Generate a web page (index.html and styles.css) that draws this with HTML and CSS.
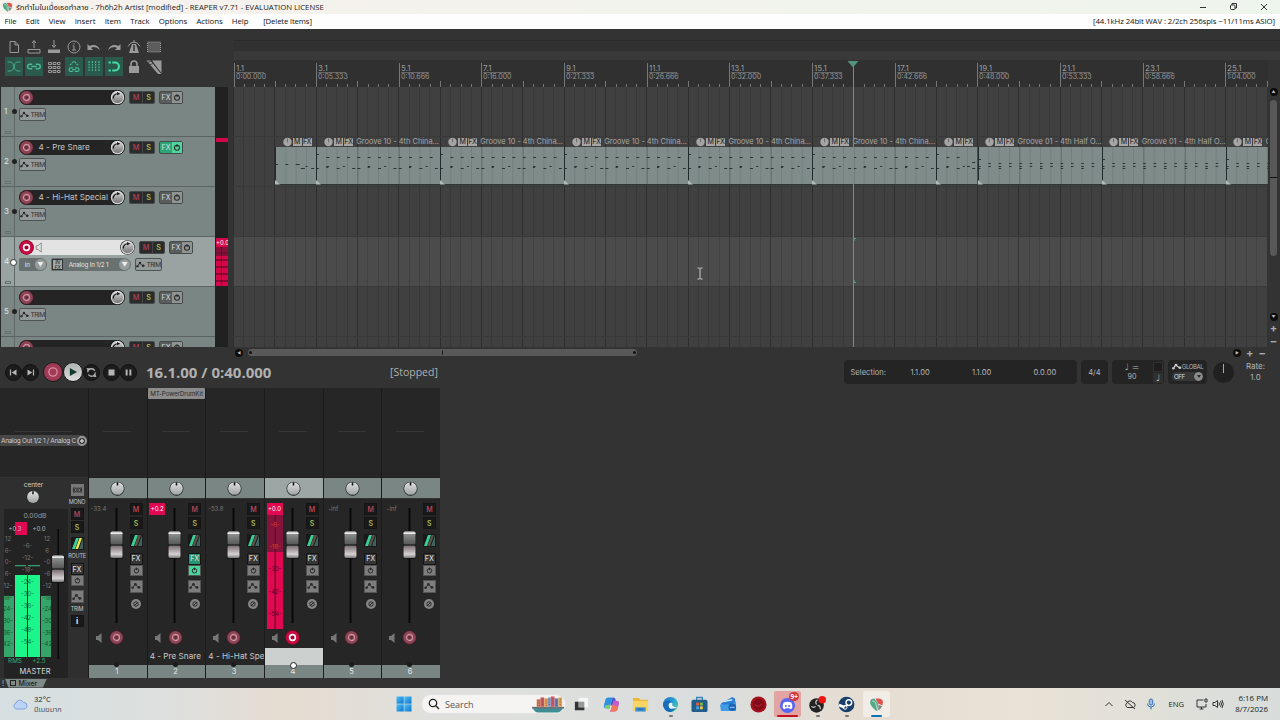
FILE: index.html
```html
<!DOCTYPE html>
<html lang="en">
<head>
    <meta charset="UTF-8">
    <title>REAPER v7.71 - EVALUATION LICENSE</title>
    <link rel="stylesheet" href="styles.css">
</head>
<body>
<!-- shared icons -->
<svg class="defs" width="0" height="0">
    <defs>
        <linearGradient id="gKnob" x1="0" y1="0" x2="0" y2="1"><stop offset="0" stop-color="#dfe2e1"/><stop offset="1" stop-color="#9fa3a2"/></linearGradient>
        <linearGradient id="gDark" x1="0" y1="0" x2="0" y2="1"><stop offset="0" stop-color="#dcdcdc"/><stop offset=".5" stop-color="#a2a2a2"/><stop offset="1" stop-color="#777"/></linearGradient>
        <linearGradient id="gCapA" x1="0" y1="0" x2="0" y2="1"><stop offset="0" stop-color="#e8e8e8"/><stop offset=".2" stop-color="#8b8f8e"/><stop offset="1" stop-color="#555"/></linearGradient>
        <linearGradient id="gCapB" x1="0" y1="0" x2="0" y2="1"><stop offset="0" stop-color="#766b6e"/><stop offset=".7" stop-color="#d8d2d4"/><stop offset="1" stop-color="#777"/></linearGradient>
        <linearGradient id="gWin" x1="0" y1="0" x2="1" y2="1"><stop offset="0" stop-color="#52c2f5"/><stop offset="1" stop-color="#0b74cf"/></linearGradient>
        <linearGradient id="gEdge" x1="0" y1="0" x2="1" y2="1"><stop offset="0" stop-color="#1d6fc0"/><stop offset=".5" stop-color="#2aa5d8"/><stop offset="1" stop-color="#55d67a"/></linearGradient>
    </defs>
    <symbol id="reaper" viewBox="0 0 14 14">
        <path d="M.5 4.500Q1 1.500 4.500 1H9.500Q13 1.500 13.500 4.500 13.500 9.500 7 13.500.5 9.500.5 4.500Z" fill="#eef3ee"/>
        <path d="M1 4.500Q1.500 1.500 5 1.500L8.500 6 8 12.500 7 13Q1 9 1 4.500Z" fill="#56a987"/>
        <path d="M6 1.500H9.500Q12.500 2 13 4.500L12.500 8 8.500 6Z" fill="#e0524a"/>
        <path d="M8.800 7 12.300 8.600Q11 11 8.500 12.500Z" fill="#7d8782"/>
        <path d="M3 3.500 6 5 8 12" stroke="#d8ebe2" stroke-width=".7" fill="none"/>
    </symbol>
    <symbol id="rec" viewBox="0 0 14 14">
        <circle cx="7" cy="7" r="6.800" fill="#3a1c24"/>
        <circle cx="7" cy="7" r="6" fill="#8a4454"/>
        <circle cx="7" cy="7" r="2.800" fill="#6d3040" stroke="#cf93a1" stroke-width="1.200"/>
    </symbol>
    <symbol id="rec-on" viewBox="0 0 14 14">
        <circle cx="7" cy="7" r="6.900" fill="#6d0a26"/>
        <circle cx="7" cy="7" r="6.200" fill="#cb0a42"/>
        <circle cx="7" cy="7" r="2.700" fill="#a30032" stroke="#fff" stroke-width="1.500"/>
    </symbol>
    <symbol id="vol" viewBox="0 0 16 16">
        <circle cx="8" cy="8" r="7.800" fill="#181818"/>
        <circle cx="8" cy="8" r="7.100" fill="#e2e2e2"/>
        <circle cx="8" cy="8" r="6.100" fill="url(#gDark)"/>
        <path d="M3.500 9A4.700 4.700 0 0 1 8 4" fill="none" stroke="#151515" stroke-width="1.300"/>
        <path d="M7.500 2.200 11 4 7.500 5.700Z" fill="#151515"/>
    </symbol>
    <symbol id="pan" viewBox="0 0 14 14">
        <circle cx="7" cy="7.300" r="6.600" fill="#2c3030"/>
        <circle cx="7" cy="7" r="5.900" fill="url(#gKnob)"/>
        <path d="M7 1.200V4.200" stroke="#111" stroke-width="1.500"/>
    </symbol>
    <symbol id="power" viewBox="0 0 10 10">
        <circle cx="5" cy="5.300" r="2.500" fill="none" stroke="#2b2b2b" stroke-width="1.100"/>
        <path d="M5 1.800V4.600" stroke="#2b2b2b" stroke-width="1.100"/>
    </symbol>
    <symbol id="env" viewBox="0 0 12 8">
        <path d="M1.500 6.300 4.500 2.300 7.500 5 10.500 5.600" fill="none" stroke="#2b2b2b"/>
        <circle cx="1.700" cy="6" r="1.400" fill="#2b2b2b"/><circle cx="4.800" cy="2.200" r="1.500" fill="#2b2b2b"/><circle cx="8.500" cy="5.500" r="1.500" fill="#2b2b2b"/>
    </symbol>
    <symbol id="spk" viewBox="0 0 8 12">
        <path d="M1 4H3L6.500 1V11L3 8H1Z"/>
    </symbol>
    <symbol id="route" viewBox="0 0 13 13">
        <rect width="13" height="13" fill="#191919"/>
        <path d="M1 12 5 1H8L4 12Z" class="r1"/>
        <path d="M4.500 12 8.500 1H11L7 12Z" class="r2"/>
        <path d="M8 12 12 1V12Z" class="r3"/>
    </symbol>
    <symbol id="fader" viewBox="0 0 14 30">
        <rect x=".3" y="1" width="13.400" height="28" rx="2.500" fill="#151515"/>
        <rect x="1" y="1.500" width="12" height="13" rx="1.500" fill="url(#gCapA)"/>
        <rect x="1" y="15.500" width="12" height="12.500" rx="1.500" fill="url(#gCapB)"/>
        <path d="M1 3.300H13" stroke="#eee" stroke-width="1.200"/>
        <path d="M1 15H13" stroke="#333"/>
    </symbol>
    <symbol id="phase" viewBox="0 0 12 12">
        <circle cx="6" cy="6" r="5" fill="#858585"/><circle cx="6" cy="6" r="2.200" fill="none" stroke="#2b2b2b"/><path d="M4 8 8 4" stroke="#2b2b2b" stroke-width=".9"/>
    </symbol>
    <symbol id="clock" viewBox="0 0 10 10">
        <circle cx="5" cy="5" r="4.700" fill="#a5a5a5"/><path d="M5 1V5.300" stroke="#666"/>
    </symbol>
</svg>

<div class="titlebar">
    <svg class="logo"><use href="#reaper"/></svg>
    <span class="caption">รักทำไมในเมื่อเธอทำลาย - 7h6h2h Artist [modified] - REAPER v7.71 - EVALUATION LICENSE</span>
    <svg class="winbtns" width="80" height="14" viewBox="0 0 80 14" fill="none" stroke="#333">
        <path d="M5 7.500H11"/>
        <rect x="35.500" y="5" width="4.500" height="4.500" rx="1"/><path d="M37 5V3.500H41.500V8H40"/>
        <path d="M66 4 72 10M72 4 66 10"/>
    </svg>
</div>
<div class="menubar">
    <span>File</span><span>Edit</span><span>View</span><span>Insert</span><span>Item</span><span>Track</span><span>Options</span><span>Actions</span><span>Help</span><span class="last">[Delete items]</span>
    <span class="audio">[44.1kHz 24bit WAV : 2/2ch 256spls ~11/11ms ASIO]</span>
</div>

<div class="top">
    <div class="toolbar">
        <svg viewBox="0 0 20 20"><path d="M6 4.500H11L14.500 8V15.500H6ZM11 4.500V8H14.500"/></svg>
        <svg viewBox="0 0 20 20"><path d="M4 12.500H16V16H4ZM10 11V4M8 6 10 3.500 12 6"/></svg>
        <svg viewBox="0 0 20 20"><path d="M4 12.500H16V16H4Z" class="f"/><path d="M10 3V10M8 8 10 10.500 12 8"/></svg>
        <svg viewBox="0 0 20 20"><circle cx="10" cy="10" r="6"/><path d="M8.500 9H10V13M8 13H12M10 6V7.500"/></svg>
        <svg viewBox="0 0 20 20"><path d="M3.500 7V13H9L7 11Q11 8.500 16 13 13 6 5.500 9Z" class="f"/></svg>
        <svg viewBox="0 0 20 20"><path d="M16.500 7V13H11L13 11Q9 8.500 4 13 7 6 14.500 9Z" class="f"/></svg>
        <svg viewBox="0 0 20 20"><path d="M8 7H12L15 16H5Z" class="f"/><path d="M10 8V14" stroke="#333" stroke-width="1.500"/><path d="M10 3V6M4 9.500Q6 5 10 5 14 5 16 9.500"/></svg>
        <svg viewBox="0 0 20 20"><rect x="3.500" y="5" width="13" height="10" fill="#5c5c5c" stroke-dasharray="1 1"/></svg>
        <svg class="on" viewBox="0 0 20 20"><path d="M3 5H6C11 5 9 15 14 15H17M3 15H6C11 15 9 5 14 5H17"/></svg>
        <svg class="on" viewBox="0 0 20 20"><path d="M8 7.500H5.500A2.500 2.500 0 0 0 5.500 12.500H8M12 7.500H14.500A2.500 2.500 0 0 1 14.500 12.500H12M7 10H13" stroke-width="1.600"/></svg>
        <svg viewBox="0 0 20 20"><path d="M4.500 5.500H7.500V7.500H4.500ZM9 5.500H12V7.500H9ZM13.500 5.500H16V7.500H13.500ZM4.500 9.500H7.500V11.500H4.500ZM9 9.500H12V11.500H9ZM13.500 9.500H16V11.500H13.500ZM4.500 13.500H7.500V15.500H4.500ZM9 13.500H12V15.500H9ZM13.500 13.500H16V15.500H13.500Z"/></svg>
        <svg class="on" viewBox="0 0 20 20"><path d="M5.500 8.500 10 4 14.500 8.500" stroke-dasharray="2.500 1" stroke-width="1.300"/><path d="M9 11.500H6.500A2 2 0 0 0 6.500 15.500H9M11 11.500H13.500A2 2 0 0 1 13.500 15.500H11M8 13.500H12" stroke-width="1.400"/></svg>
        <svg class="on" viewBox="0 0 20 20"><path d="M4.500 4V16M8.200 4V16M11.800 4V16M15.500 4V16" stroke-dasharray="2 1" stroke-width="1.300"/></svg>
        <svg class="on magnet" viewBox="0 0 20 20"><path d="M8 5.500H11A4.500 4.500 0 0 1 11 14.500H8" stroke-width="2.300"/><path d="M4 5.500H6.500M4 14.500H6.500" stroke-width="2.300"/></svg>
        <svg viewBox="0 0 20 20"><rect x="5" y="9" width="10" height="7" class="f"/><path d="M7 9V7A3 3 0 0 1 13 7V9" stroke-width="1.600"/></svg>
        <svg viewBox="0 0 20 20"><path d="M8 3.500H17.500V16.500Z" class="f"/><path d="M2.500 3.500H6.500L17.500 17H14Z" class="f"/><path d="M6.500 3 17.500 16.800" stroke="#333" stroke-width=".9"/><path d="M3 6 7 4M5 8 9 6.500" stroke="#333" stroke-width=".8"/></svg>
    </div>
    <div class="ruler-wrap">
        <div class="band"></div>
        <div class="band2"></div>
        <svg id="ruler" width="1034" height="27"></svg>
    </div>
</div>

<div class="middle">
    <div class="tcp" id="tcp"></div>
    <div class="meters">
        <div class="clip"></div>
        <div class="live"><b>+0.0</b><i></i></div>
    </div>
    <div class="arrange">
        <svg id="grid" width="1034" height="260"></svg>
        <div class="items" id="items"></div>
        <svg class="cursor" width="12" height="287" viewBox="0 0 12 287"><path d="M.5 1H11.500L6 7.500Z" fill="#55917f"/><path d="M6.500 7V287" stroke="#4fa18c"/><path d="M9 178.500H7V181M7 220V222.500H9" stroke="#4fa18c" fill="none"/></svg>
        <svg class="ibeam" width="8" height="13" viewBox="0 0 8 13" fill="none" stroke="#ccc"><path d="M1.500 1H3.500L4 1.500 4.500 1H6.500M4 1.500V11.500M1.500 12H3.500L4 11.500 4.500 12H6.500"/></svg>
    </div>
    <div class="vscroll">
        <span class="arr">▲</span>
        <div class="thumb"></div>
        <span class="arr">▼</span>
        <span class="pm">+</span>
        <span class="pm">−</span>
    </div>
</div>
<div class="hscroll">
    <span class="arr">◀</span>
    <div class="thumb"><i></i><i class="mid"></i><i></i></div>
    <span class="arr right">▶</span><span class="pm">+</span><span class="pm">−</span>
</div>

<div class="transport">
    <div class="btns">
        <svg viewBox="0 0 20 20"><path d="M6 6V14" stroke-width="1.600"/><path d="M14 6V14L7.500 10Z" class="g"/></svg>
        <svg viewBox="0 0 20 20"><path d="M14 6V14" stroke-width="1.600"/><path d="M6 6V14L12.500 10Z" class="g"/></svg>
        <svg class="big rcd" viewBox="0 0 20 20"><circle cx="10" cy="10" r="4.600"/></svg>
        <svg class="big play" viewBox="0 0 20 20"><path d="M6.500 5.500V14.500L14.500 10Z"/></svg>
        <svg viewBox="0 0 20 20"><circle cx="10" cy="10" r="5" stroke-width="1.700" stroke-dasharray="12.500 3.200"/><path d="M3.500 4 8 4.500 5 8ZM16.500 16 12 15.500 15 12Z" class="g"/></svg>
        <svg class="gap" viewBox="0 0 20 20"><rect x="6" y="6" width="8" height="8" class="g"/></svg>
        <svg viewBox="0 0 20 20"><path d="M7.500 6V14M12.500 6V14" stroke-width="2.600"/></svg>
    </div>
    <div class="time">16.1.00 / 0:40.000</div>
    <div class="status">[Stopped]</div>
    <div class="panel selection"><span>Selection:</span><span>1.1.00</span><span>1.1.00</span><span>0.0.00</span></div>
    <div class="panel sig">4/4</div>
    <div class="panel bpm">
        <div class="bpm-l"><span>♩ =</span><span>90</span></div>
        <div class="bpm-r"><i></i><i>♩</i></div>
    </div>
    <div class="panel global">
        <span class="gl"><svg width="10" height="7" viewBox="0 0 12 8"><path d="M1.500 6.300 4.500 2.300 9 5.500" stroke="#ccc" fill="none" stroke-width="1.500"/><circle cx="1.700" cy="6" r="1.500" fill="#ccc"/><circle cx="4.800" cy="2.200" r="1.600" fill="#ccc"/><circle cx="9.500" cy="5.500" r="1.600" fill="#ccc"/></svg>GLOBAL</span>
        <span class="off">OFF<b></b></span>
    </div>
    <div class="rateknob"></div>
    <div class="rate"><span>Rate:</span><span>1.0</span></div>
</div>

<div class="mixer">
    <div class="master">
        <div class="out"><div class="line"></div><div class="outbtn"><span>Analog Out 1/2 1 / Analog C</span><b></b></div></div>
        <div class="mbody">
            <div class="mleft">
                <div class="center">center</div>
                <svg class="knob"><use href="#pan"/></svg>
                <svg id="mmeter" width="64" height="169"></svg>
            </div>
            <div class="mright">
                <svg class="mono" width="13" height="12" viewBox="0 0 13 12"><rect width="13" height="12" fill="#777"/><path d="M3 3Q1.500 6 3 9M10 3Q11.500 6 10 9" stroke="#333" fill="none"/><circle cx="5.300" cy="6" r="2" fill="none" stroke="#333"/><circle cx="7.700" cy="6" r="2" fill="none" stroke="#333"/></svg>
                <label>MONO</label>
                <span class="mb m">M</span><span class="mb s">S</span>
                <svg class="rt bright" width="13" height="13"><use href="#route"/></svg>
                <label>ROUTE</label>
                <span class="mb fx">FX</span><span class="mb pw"><svg width="9" height="9"><use href="#power"/></svg></span>
                <span class="mb ev"><svg width="11" height="8"><use href="#env"/></svg></span>
                <label>TRIM</label>
                <span class="mb info">i</span>
            </div>
        </div>
    </div>
    <div class="strips" id="strips"></div>
</div>
<div class="dock"><span class="bang">!</span><span class="tab"><i></i>Mixer</span></div>

<div class="taskbar">
    <div class="weather">
        <svg width="16" height="14" viewBox="0 0 16 14"><path d="M4 12A3.200 3.200 0 0 1 4 6 4 4 0 0 1 11.500 5.500 3.300 3.300 0 0 1 12.500 12Z" fill="#bcd3f6" stroke="#7fa3dd"/></svg>
        <div><span>32°C</span><span class="thai">มีเมฆมาก</span></div>
    </div>
    <div class="apps">
        <svg class="start" width="16" height="16" viewBox="0 0 16 16" fill="url(#gWin)"><rect x=".5" y=".5" width="7.200" height="7.200"/><rect x="8.300" y=".5" width="7.200" height="7.200"/><rect x=".5" y="8.300" width="7.200" height="7.200"/><rect x="8.300" y="8.300" width="7.200" height="7.200"/></svg>
        <div class="search">
            <svg width="12" height="12" viewBox="0 0 12 12" fill="none" stroke="#222" stroke-width="1.300"><circle cx="5" cy="5" r="3.700"/><path d="M7.800 7.800 11 11"/></svg>
            <span>Search</span>
            <svg width="32" height="18" viewBox="0 0 34 18">
                <path d="M1 13H33Q31 18 26 18H7Q2 18 1 13Z" fill="#3e8e93"/><path d="M0 12H34V14H0Z" fill="#66757c"/>
                <path d="M5 4H9V12H5Z" fill="#d37a52"/><path d="M9 2H13V12H9Z" fill="#c65a62"/><path d="M13 3H17V12H13Z" fill="#e29b55"/><path d="M17 2H20V12H17Z" fill="#7c9cc8"/><path d="M20 1H24V12H20Z" fill="#d9545c"/><path d="M24 3H28V12H24Z" fill="#5d7db5"/><path d="M28 2H32V12H28Z" fill="#e0a050"/>
                <path d="M6 5V11M8 5V11M11 4V11M15 5V11M18.500 4V11M22 3V11M26 5V11M30 4V11" stroke="#5b3942" stroke-dasharray="1 1.500" opacity=".6"/>
            </svg>
        </div>
        <div class="app"><svg viewBox="0 0 18 18"><rect x="6" y="2" width="10" height="10" fill="#f6f6f6"/><path d="M2 6H6V12H12V15H2Z" fill="#333"/><rect x="6" y="6" width="6" height="6" fill="#999"/></svg></div>
        <div class="app"><svg viewBox="0 0 18 18"><path d="M6 1.500H11Q9.500 2.500 9 5L7 13H3.500Q.5 13 1 10L2.500 4Q3 1.500 6 1.500Z" fill="#2f8fe0"/><path d="M2 10 8 9 7 13Q6 14.500 4 13 1.500 13 2 10Z" fill="#7ccf6a"/><path d="M11 1.500Q13 1.500 13.500 5L11 6 10 10H8L9 5Q9.500 2.500 11 1.500Z" fill="#4a55cf"/><path d="M12 16.500H7Q8.500 15.500 9 13L11 5H14.500Q17.500 5 17 8L15.500 14Q15 16.500 12 16.500Z" fill="#c65bc5"/><path d="M9.800 9.500 16 11 15.500 14Q15 16.500 12 16.500H7Q8.500 15.500 9 13Z" fill="#f0795c"/></svg></div>
        <div class="app"><svg viewBox="0 0 18 18"><path d="M1 2H7L9 4H17V15H1Z" fill="#eab530"/><rect x="1" y="5" width="16" height="11" rx="1" fill="#f8d463"/><path d="M3.500 12H14.500V16.500H3.500Z" fill="#3a8ed2"/><path d="M6 13.500H12V14.500H6Z" fill="#1f619c"/></svg></div>
        <div class="app dot"><svg viewBox="0 0 18 18"><circle cx="9" cy="9" r="8" fill="url(#gEdge)"/><path d="M1 9Q2 4 8 5 12 6 11 9 10 11 15 12 12 17 8 17 2 16 1 9Z" fill="#176db9"/><path d="M7 10Q7 7 10 7 12 8 11 9 10 11 16 12 12 14 9 13.500 7 12.500 7 10Z" fill="#e8f4f6"/></svg></div>
        <div class="app"><svg viewBox="0 0 18 18"><path d="M6 5V1.500H12V5" fill="none" stroke="#3a89c0" stroke-width="1.500"/><rect x=".5" y="4" width="17" height="13" rx="2" fill="#205d8b"/><path d="M5.500 7H8.500V10H5.500Z" fill="#ef5e42"/><path d="M9.500 7H12.500V10H9.500Z" fill="#86bd41"/><path d="M5.500 11H8.500V14H5.500Z" fill="#41a6e8"/><path d="M9.500 11H12.500V14H9.500Z" fill="#f6c544"/></svg></div>
        <div class="app"><svg viewBox="0 0 18 18"><path d="M1 8 13 1 16 3V10L3 12Z" fill="#2c7cd3"/><path d="M4 6 13 4" stroke="#cfeefc" stroke-width="1.500"/><path d="M0 9H12L16 6H17V16H1Z" fill="#3f9de6"/><circle cx="13" cy="12" r="4" fill="#1c62b5"/><path d="M10.500 12H15.500" stroke="#9bd4f7"/></svg></div>
        <div class="app"><svg viewBox="0 0 18 18"><circle cx="9" cy="9" r="8.500" fill="#a20f1d"/><circle cx="9" cy="9" r="5.800" fill="#7e0b17"/><path d="M5 9Q9 13 13 8" stroke="#b01e2c" fill="none" stroke-width="1.300"/></svg></div>
        <div class="app discord"><svg viewBox="0 0 18 18"><circle cx="9" cy="10" r="8" fill="#5865f2"/><path d="M5 7Q9 5 13 7 15 10 14 13L12 14 11 13H7L6 14 4 13Q3 10 5 7Z" fill="#fff"/><circle cx="7.300" cy="10.500" r="1.100" fill="#5865f2"/><circle cx="10.700" cy="10.500" r="1.100" fill="#5865f2"/></svg><b>9+</b></div>
        <div class="app dot"><svg viewBox="0 0 18 18"><circle cx="8" cy="10" r="7.700" fill="#222"/><path d="M8 9Q6 6 9 4M9 10Q12 10 12 14M7 11Q5 13 2.500 11" stroke="#ccc" stroke-width="1.300" fill="none"/><circle cx="14" cy="4" r="4" fill="#f01414"/></svg></div>
        <div class="app dot"><svg viewBox="0 0 18 18"><circle cx="9" cy="9" r="8.300" fill="#173f6b"/><path d="M1 9.500 7 12" stroke="#fff" stroke-width="3"/><circle cx="11.500" cy="7" r="3" fill="#173f6b" stroke="#fff" stroke-width="1.500"/><circle cx="7.500" cy="12" r="2" fill="none" stroke="#fff"/><path d="M8 11 10 9" stroke="#fff" stroke-width="2"/></svg></div>
        <div class="app cur"><svg viewBox="0 0 18 18"><use href="#reaper" x="1" width="16" height="18"/></svg></div>
    </div>
    <div class="tray">
        <svg width="10" height="10" viewBox="0 0 10 10"><path d="M1.500 7 5 3.500 8.500 7"/></svg>
        <svg width="12" height="12" viewBox="0 0 12 12"><path d="M3.500 9.500A2.500 2.500 0 0 1 3 5 3 3 0 0 1 8.500 4.500 2.600 2.600 0 0 1 9.500 9.500ZM1 2 11 11"/></svg>
        <svg class="mic" width="10" height="12" viewBox="0 0 10 12"><rect x="3.300" y="1" width="3.400" height="6" rx="1.700" fill="#9cc0ec"/><path d="M1.500 5.500Q1.500 9 5 9T8.500 5.500M5 9V11.500"/></svg>
        <span>ENG</span>
        <svg width="12" height="12" viewBox="0 0 12 12"><path d="M7.500 2H1V9H10V6M3.500 11H7.500M5.500 9V11M9 1H11V4H9Z"/></svg>
        <svg width="12" height="12" viewBox="0 0 12 12"><path d="M1 4.500H3L5.500 2.500V9.500L3 7.500H1ZM7 4.500Q8 6 7 7.500M8.500 3Q10.500 6 8.500 9M10 2Q12.500 6 10 10"/></svg>
        <div class="clock"><span>6:16 PM</span><span>8/7/2026</span></div>
    </div>
</div>
<script src="main.js"></script>
</body>
</html>
```

FILE: styles.css
```css
*{
    box-sizing: border-box;
}
body{
    margin: 0;
    width: 1280px;
    height: 720px;
    overflow: hidden;
    display: flex;
    flex-direction: column;
    background: #333;
    color: #b4b4b4;
    font-family: Inter, "Noto Sans", "Liberation Sans", sans-serif;
    font-size: 8px;
}
.defs{
    position: absolute;
}
svg{
    display: block;
    flex: none;
}
/* title and menu */
.titlebar{
    height: 14px;
    flex: none;
    display: flex;
    align-items: center;
    background: linear-gradient(90deg, #f6f1ec, #f3f3ee 50%, #eef5ec);
    color: #1c1c1c;
    font-family: "Open Sans", "Noto Sans", "Noto Sans Thai", sans-serif;
    font-size: 7.750px;
}
.logo{
    width: 11px;
    height: 12px;
    margin: 0 3px 0 2px;
}
.caption{
    white-space: nowrap;
    line-height: 15px;
}
.winbtns{
    margin-left: auto;
    margin-right: 5px;
}
.menubar{
    height: 15px;
    flex: none;
    display: flex;
    align-items: center;
    padding: 0 5px 1px 4.500px;
    background: #fefefe;
    color: #111;
    font-family: "Open Sans", sans-serif;
    font-size: 7.800px;
}
.menubar span{
    margin-right: 9.200px;
    letter-spacing: -.05px;
    white-space: nowrap;
}
.menubar .last{
    margin-left: 5.500px;
    letter-spacing: -.15px;
}
.menubar .audio{
    margin: 0 0 0 auto;
    letter-spacing: -.1px;
}
/* toolbar and ruler */
.top{
    height: 58px;
    flex: none;
    display: flex;
    background: #333;
}
.toolbar{
    width: 234px;
    padding: 8px 70px 0 4px;
    display: grid;
    grid-template-columns: repeat(8, 20px);
    grid-auto-rows: 20px;
}
.toolbar svg{
    width: 20px;
    height: 20px;
    fill: none;
    stroke: #9a9a9a;
}
.toolbar .f{
    fill: #9a9a9a;
    stroke: none;
}
.toolbar .on{
    width: 18px;
    height: 19px;
    margin-left: 1px;
    background: #2b594b;
    stroke: #4bb892;
}
.toolbar .magnet{
    stroke: #45dba5;
}
.ruler-wrap{
    flex: 1;
}
.band{
    height: 12px;
    border-bottom: 1px solid #2a2a2a;
}
.band2{
    height: 19px;
    border-top: 10px solid #313131;
    background: #393939;
}
#ruler{
    background: #303030;
}
#ruler text{
    fill: #999;
    font-size: 8px;
}
#ruler .tm{
    font-size: 7px;
}
/* arrange */
.middle{
    height: 260px;
    flex: none;
    display: flex;
}
.tcp{
    width: 215px;
    flex: none;
    padding-left: 1px;
    overflow: hidden;
    background: #2a2a2a;
}
.track{
    height: 50px;
    display: flex;
    background: #7a8684;
    border-bottom: 1px solid #5b6463;
}
.track.sel{
    background: #99a4a2;
}
.track .no{
    width: 14px;
    flex: none;
    position: relative;
    border-right: 1px solid #5f6968;
    color: #dfe3e2;
    font-size: 8px;
    line-height: 49px;
    padding-left: 3px;
}
.track .no::after{
    content: "";
    position: absolute;
    right: -3px;
    top: 22px;
    width: 5px;
    height: 5px;
    border-radius: 50%;
    background: #222;
}
.track.sel .no::after{
    background: #fff;
    border: 1px solid #333;
}
.track .no i{
    position: absolute;
    left: 4px;
    bottom: 2px;
    width: 6px;
    height: 3px;
    border: 1px solid #67716f;
}
.rows{
    padding: 2.500px 0 0 4px;
}
.row{
    display: flex;
    align-items: center;
    height: 15px;
}
.row2{
    margin-top: 2.500px;
}
.pill{
    width: 106px;
    height: 15px;
    border-radius: 8px;
    background: #242424;
    display: flex;
    align-items: center;
    justify-content: space-between;
    color: #c4c4c4;
    font-size: 8.200px;
}
.pill svg{
    width: 15px;
    height: 15px;
}
.pill span{
    flex: 1;
    white-space: nowrap;
    padding-left: 4.500px;
}
.sel .pill{
    width: 116px;
    background: #e2e3e2;
}
.sel .pill .spk{
    width: 8px;
    height: 11px;
    margin-left: 1px;
    fill: none;
    stroke: #888;
}
.ms, .fxp{
    display: flex;
    height: 13px;
    margin-left: 4px;
    border-radius: 2px;
    background: #2b2b2b;
    border: 1px solid #444a49;
    font-size: 7.300px;
}
.ms b{
    width: 12px;
    font-weight: 500;
    text-align: center;
    line-height: 12px;
    color: #b04157;
}
.ms b + b{
    color: #b9c55a;
    border-left: 1px solid #444;
}
.fxp{
    width: 24px;
    background: #5a5c5c;
    color: #ddd;
    line-height: 12px;
    padding-left: 1.500px;
    font-size: 7px;
    justify-content: space-between;
}
.fxp svg{
    width: 10px;
    height: 11px;
    background: #8f9493;
}
.fxp.on{
    background: #2fa478;
}
.fxp.on svg{
    background: #4ed49c;
}
.trim{
    display: flex;
    align-items: center;
    justify-content: center;
    width: 27px;
    height: 13px;
    border: 1px solid #4d5352;
    border-radius: 2px;
    background: #939a99;
    color: #333;
    font-size: 6.600px;
    letter-spacing: -.5px;
}
.trim svg{
    width: 10px;
    height: 7px;
}
.drop{
    display: flex;
    align-items: center;
    justify-content: flex-end;
    height: 13px;
    border-radius: 2px 7px 7px 2px;
    background: #697170;
    color: #e0e3e2;
    font-size: 6.300px;
    white-space: nowrap;
}
.drop b{
    width: 11px;
    height: 11px;
    margin: 0 1px 0 5px;
    border-radius: 50%;
    background: #969c9b;
    color: #eee;
    font-size: 6px;
    line-height: 11px;
    text-align: center;
}
.drop.in{
    width: 28px;
}
.drop.src{
    width: 80px;
    margin: 0 4px 0 4px;
    justify-content: space-between;
    letter-spacing: -.2px;
}
.infx{
    width: 11px;
    height: 11px;
    margin-left: 1px;
    background: #a2a8a7;
    border: 1px solid #333;
    color: #222;
    font-size: 5px;
    line-height: 4.500px;
    white-space: normal;
    text-align: center;
}
.meters{
    width: 18px;
    flex: none;
    padding: 51px 5px 0 1px;
    background: linear-gradient(90deg, #212121 13px, #333 13px);
}
.clip{
    height: 4px;
    background: #d5064a;
}
.live{
    height: 48px;
    margin-top: 96px;
    overflow: hidden;
    background: #d5064a;
    color: #fff;
    font-size: 6px;
    line-height: 9px;
}
.live b{
    display: block;
    font-weight: 400;
    width: 30px;
}
.live i{
    display: block;
    height: 39px;
    background:
        linear-gradient(90deg, transparent 5px, #70082d 5px 6px, transparent 6px),
        linear-gradient(rgba(100, 20, 50, .7) 9px, transparent 9px),
        repeating-linear-gradient(transparent 0 5px, rgba(80, 5, 35, .55) 5px 7px);
}
.arrange{
    position: relative;
    width: 1035px;
    flex: none;
}
#grid{
    background: #404040;
}
/* items lie over the grid */
.items{
    position: absolute;
    left: 42px;
    top: 49px;
    width: 993px;
    display: flex;
    overflow: hidden;
}
.item{
    flex: none;
    overflow: hidden;
}
.ihead{
    height: 11px;
    display: flex;
    align-items: center;
    gap: 1px;
    padding-left: 7.500px;
    color: #a8a8a8;
    font-size: 7.400px;
    white-space: nowrap;
}
.ihead b{
    width: 9px;
    height: 8px;
    background: #a5a5a5;
    color: #303030;
    font-weight: 500;
    font-size: 7px;
    line-height: 8px;
    text-align: center;
    letter-spacing: -.5px;
}
.ihead svg{
    width: 9px;
    height: 10px;
}
.ihead span{
    padding-left: 2.500px;
}
.cursor{
    position: absolute;
    left: 614px;
    top: -27px;
}
.ibeam{
    position: absolute;
    left: 463px;
    top: 180px;
}
.vscroll{
    width: 11px;
    display: flex;
    flex-direction: column;
    align-items: center;
    gap: 2px;
}
.vscroll .thumb{
    width: 7px;
    height: 156px;
    flex: none;
    margin: 2px 0 54px;
    border-radius: 4px;
    background: linear-gradient(#585858 77px, #111 77px 78px, #585858 78px);
}
.arr{
    width: 8px;
    height: 8px;
    flex: none;
    border-radius: 50%;
    background: #0c0c0c;
    color: #bbb;
    font-size: 4px;
    line-height: 8px;
    text-align: center;
    margin-top: 1px;
}
.pm{
    color: #aaa;
    font-size: 11px;
    font-weight: 700;
    line-height: 12px;
}
.vscroll .pm{
    line-height: 11px;
}
.hscroll{
    height: 11px;
    flex: none;
    display: flex;
    align-items: center;
    padding-left: 235px;
    padding-right: 14px;
    gap: 5px;
}
.hscroll .thumb{
    width: 389px;
    height: 7px;
    display: flex;
    align-items: center;
    justify-content: space-between;
    padding: 0 1px;
    border-radius: 4px;
    background: #595959;
}
.hscroll i{
    width: 3px;
    height: 3px;
    border-radius: 50%;
    background: #111;
}
.hscroll .mid{
    width: 1px;
    height: 5px;
}
.hscroll .right{
    margin-left: auto;
}
/* transport */
.transport{
    height: 30px;
    flex: none;
    display: flex;
    align-items: center;
    padding-bottom: 2px;
    font-size: 8px;
}
.btns{
    width: 146px;
    display: flex;
    align-items: center;
    padding-left: 5px;
}
.btns svg{
    width: 17px;
    height: 17px;
    border-radius: 50%;
    background: #1c1c1c;
    border: 1px solid #111;
    fill: none;
    stroke: #b5b5b5;
}
.btns svg.big{
    width: 20px;
    height: 20px;
    border: 1px solid #1a1a1a;
}
.btns .big.rcd{
    margin-left: 4px;
    background: #a03a55;
    stroke: #d88ca0;
    stroke-width: 1.500;
}
.btns .big.play{
    background: linear-gradient(#aeb2b1, #dedede);
    fill: #123b30;
    stroke: none;
}
.btns .gap{
    margin-left: 3px;
}
.btns .g{
    fill: #b5b5b5;
    stroke: none;
}
.time{
    width: 244px;
    font-family: "Open Sans", sans-serif;
    font-weight: 700;
    font-size: 15px;
    color: #b0b0b0;
    white-space: nowrap;
}
.status{
    width: 454px;
    font-family: "Open Sans", sans-serif;
    font-size: 10.500px;
    color: #b0b0b0;
}
.panel{
    height: 24px;
    margin-right: 4px;
    border-radius: 4px;
    background: #242424;
    display: flex;
    align-items: center;
}
.selection{
    width: 233px;
    padding-left: 6.500px;
    font-size: 7.600px;
}
.selection span{
    width: 61.500px;
    flex: none;
}
.selection span:first-child{
    width: 60px;
}
.selection span:last-child{
    width: auto;
}
.sig{
    width: 27px;
    justify-content: center;
    font-size: 7.600px;
}
.bpm{
    width: 52px;
    justify-content: space-between;
}
.bpm-l{
    width: 40px;
    display: flex;
    flex-direction: column;
    align-items: center;
    line-height: 10px;
    font-size: 7.200px;
}
.bpm-l span:first-child{
    font-family: "DejaVu Sans", sans-serif;
    font-size: 9px;
}
.bpm-r i{
    display: block;
    width: 10px;
    height: 10px;
    border: 1px solid #303030;
    background: #1e1e1e;
    margin: 1px;
    font: 9px/9px "DejaVu Sans", sans-serif;
    text-align: center;
    color: #ccc;
}
.bpm-r i + i{
    background: #303030;
}
.global{
    width: 39px;
    flex-direction: column;
    justify-content: center;
    gap: 2px;
    color: #b5b5b5;
    font-size: 6px;
    letter-spacing: -.4px;
}
.gl{
    display: flex;
    align-items: center;
}
.off{
    width: 31px;
    height: 9px;
    display: flex;
    align-items: center;
    justify-content: space-between;
    padding-left: 2px;
    border-radius: 5px;
    background: #383838;
    color: #ddd;
    font-size: 6.200px;
}
.off b{
    width: 9px;
    height: 9px;
    border-radius: 50%;
    background: #8c8c8c;
    clip-path: circle(4.500px);
    display: flex;
    align-items: center;
    justify-content: center;
}
.off b::after{
    content: "";
    border: 2.500px solid transparent;
    border-top: 3.500px solid #2a2a2a;
    border-bottom: 0;
}
.rateknob{
    width: 21px;
    height: 21px;
    margin-left: 2px;
    border-radius: 50%;
    background: linear-gradient(#aaa, #aaa) 10px 2px / 1px 9px no-repeat #202020;
}
.rate{
    flex: 1;
    display: flex;
    flex-direction: column;
    align-items: center;
    line-height: 11px;
    padding-right: 3px;
}
/* mixer */
.mixer{
    width: 440px;
    height: 290px;
    flex: none;
    display: flex;
    background: #262626;
}
.master{
    width: 88px;
    flex: none;
}
.out{
    height: 90px;
    display: flex;
    flex-direction: column;
    border-bottom: 1px solid #333;
}
.line{
    width: 57px;
    height: 44px;
    margin-left: 15px;
    border-bottom: 1px solid #363636;
}
.outbtn{
    width: 87px;
    height: 11px;
    margin-top: 3px;
    display: flex;
    align-items: center;
    justify-content: space-between;
    padding-left: 1px;
    border-radius: 0 6px 6px 0;
    background: #474747;
    color: #ccc;
    font-size: 6.500px;
    letter-spacing: -.32px;
    white-space: nowrap;
}
.outbtn b{
    width: 10px;
    height: 10px;
    border-radius: 50%;
    border: 2px solid #999;
    background: radial-gradient(#bbb 1.500px, #333 2px);
}
.mbody{
    height: 200px;
    display: flex;
    background: #2f2f2f;
}
.mleft{
    width: 68px;
    padding-left: 4px;
    display: flex;
    flex-direction: column;
    align-items: center;
}
.center{
    height: 12px;
    line-height: 14px;
    color: #d2d2d2;
    font-size: 6.500px;
    margin-right: 5px;
}
.knob{
    width: 14px;
    height: 14px;
    margin: 0 6px 5px 0;
}
#mmeter{
    background: #232323;
}
.mright{
    width: 18px;
    padding: 6px 0 0 0;
    display: flex;
    flex-direction: column;
    align-items: center;
}
.mright label{
    height: 12px;
    font-size: 5.500px;
    line-height: 12px;
    color: #c4c4c4;
    letter-spacing: -.2px;
}
.mb{
    width: 13px;
    height: 12px;
    display: flex;
    align-items: center;
    justify-content: center;
    flex: none;
    background: #191919;
    border: 1px solid #151515;
    font-size: 7px;
    font-weight: 500;
}
.m{
    color: #c04a61;
}
.s{
    color: #bcc858;
    margin-top: 1px;
}
.rt{
    margin: 5px 0 0;
}
.r1{
    fill: #3bcf9a;
}
.r2{
    fill: var(--mid, #5c5647);
}
.r3{
    fill: #3f6361;
}
.mb.fx{
    margin-top: 6px;
    background: #373737;
    color: #d5d5d5;
    height: 12px;
}
.mb.pw{
    background: #7d7d7d;
    border-color: #555;
    height: 11px;
}
.mb.ev{
    height: 13px;
    margin-top: 4px;
    background: #7d7d7d;
    border-color: #555;
}
.mright .bright{
    margin-top: 4px;
    --mid: #f1ea3b;
}
.mright .fx{
    margin-top: 1px;
}
.mright .info{
    color: #eee;
    font-weight: 700;
    font-size: 8px;
}
.strips{
    flex: 1;
    display: flex;
}
.strip{
    flex: 1;
    min-width: 0;
    border-left: 1px solid #1b1b1b;
}
.fxlist{
    height: 90px;
    border-bottom: 1px solid #222;
}
.fxlist span{
    display: block;
    height: 11px;
    border-radius: 1px;
    background: #8c8c8c;
    color: #2b2b2b;
    font-size: 6.200px;
    line-height: 11px;
    letter-spacing: -.1px;
    text-align: center;
    white-space: nowrap;
}
.fxlist i{
    display: block;
    width: 28px;
    height: 44px;
    margin-left: 14px;
    border-bottom: 1px solid #363636;
}
.fxlist span + i{
    height: 33px;
}
.panrow{
    height: 21px;
    display: flex;
    align-items: center;
    justify-content: center;
    padding-right: 1px;
    background: #7a8684;
    border-bottom: 1px solid #333;
}
.strip.sel .panrow{
    background: #9ca7a5;
}
.panrow svg{
    width: 15px;
    height: 15px;
}
.sbody{
    height: 129px;
    display: grid;
    grid-template-columns: 19.500px 16px 13px;
    padding-top: 4px;
}
.read{
    height: 126px;
    padding-left: 1.500px;
}
.read span{
    display: block;
    width: 16px;
    height: 12px;
    line-height: 12px;
    font-size: 6px;
    text-align: center;
    color: #777;
}
.read .hot{
    background: #e00850;
    color: #fff;
}
.bcol{
    margin-left: 5px;
    width: 13px;
}
.bcol .s{
    margin-top: 2px;
}
.bcol .fx{
    margin-top: 5.500px;
}
.bcol .phase{
    margin: 5px 0 0 .500px;
}
.on-fx .mb.fx{
    background: #279570;
}
.on-fx .mb.pw{
    background: #45d69d;
}
.recrow{
    height: 20px;
    display: flex;
    align-items: center;
    padding: 0 0 1px 6px;
    gap: 6px;
}
.recrow svg{
    width: 15px;
    height: 15px;
}
.recrow .spk{
    width: 8px;
    height: 12px;
    fill: #777;
}
.name{
    height: 17px;
    padding-left: 2px;
    overflow: hidden;
    color: #c8c8c8;
    font-size: 8.200px;
    line-height: 17px;
    white-space: nowrap;
}
.strip.sel .name{
    background: #ccd1d0;
}
.num{
    height: 13px;
    position: relative;
    background: #7a8684;
    color: #e2e6e5;
    font-size: 7.500px;
    line-height: 13px;
    padding-right: 2px;
    text-align: center;
}
.num::before{
    content: "";
    position: absolute;
    left: 25px;
    top: -3px;
    width: 5px;
    height: 5px;
    border-radius: 50%;
    background: #1b1b1b;
}
.strip.sel .num::before{
    background: #fff;
    border: 1px solid #222;
}
.dock{
    height: 10px;
    flex: none;
    display: flex;
    align-items: center;
    padding-left: 2px;
    font-size: 7px;
}
.tab{
    height: 9px;
    width: 42px;
    margin-left: 1px;
    display: flex;
    align-items: center;
    gap: 2.500px;
    padding-left: 5px;
    background: #7f8a88;
    color: #1c1c1c;
    clip-path: polygon(0 0, 100% 0, 90% 100%, 8% 100%);
    font-weight: 500;
}
.tab i{
    width: 6px;
    height: 6px;
    border: 1px solid #222;
}
/* windows taskbar */
.taskbar{
    height: 32px;
    flex: none;
    display: flex;
    align-items: center;
    background: linear-gradient(90deg, #d6dfe1, #dde0de 13%, #e6ddd2 22%, #dfe0dc 34%, #dadddd 55%, #e6ddd2 67%, #e9e2d6 80%, #d8dddb);
    color: #222;
    font-family: "Open Sans", "Noto Sans Thai", sans-serif;
    font-size: 7.600px;
}
.weather{
    width: 396px;
    display: flex;
    align-items: center;
    padding-left: 12px;
    gap: 6px;
    line-height: 10px;
}
.weather div, .clock{
    display: flex;
    flex-direction: column;
}
.thai{
    color: #555;
    font-size: 7.400px;
}
.apps{
    display: flex;
    align-items: center;
}
.search{
    width: 145px;
    height: 20px;
    margin: 0 1px 0 9px;
    display: flex;
    align-items: center;
    padding: 0 1px 0 6px;
    border-radius: 10px;
    background: #f5f4f3;
    border: 1px solid #e2e2e2;
    font-size: 9px;
    color: #555;
}
.search span{
    flex: 1;
    padding-left: 5px;
}
.app{
    position: relative;
    width: 27px;
    height: 26px;
    margin: 0 1.230px;
    display: flex;
    align-items: center;
    justify-content: center;
    border-radius: 2px;
}
.app svg{
    width: 17px;
    height: 17px;
}
.dot::after, .cur::after, .discord::after{
    content: "";
    position: absolute;
    left: 12px;
    bottom: 0;
    width: 4px;
    height: 2px;
    border-radius: 1px;
    background: #777;
}
.discord{
    background: #e2a3a3;
}
.discord::after{
    left: 3px;
    width: 21px;
    background: #c4121c;
}
.discord b{
    position: absolute;
    right: 2px;
    top: 1px;
    width: 10px;
    height: 9px;
    border-radius: 5px;
    background: #d0393f;
    color: #fff;
    font-size: 6.500px;
    line-height: 9px;
    text-align: center;
}
.cur{
    background: #f1ece6;
}
.cur::after{
    left: 8px;
    width: 11px;
    background: #0f71b8;
}
.tray{
    margin-left: auto;
    display: flex;
    align-items: center;
    padding-right: 12px;
}
.tray svg{
    margin-right: 10px;
    fill: none;
    stroke: #333;
}
.tray .mic{
    stroke: #3670b8;
    margin: 0 13px 0 0;
}
.tray span + svg{
    margin: 0 4px 0 12px;
}
.tray svg:nth-of-type(5){
    margin-right: 8px;
}
.clock{
    width: 36px;
    align-items: flex-end;
    line-height: 11px;
    font-size: 7.900px;
    white-space: nowrap;
}
```

FILE: main.js
```js
var BAR = 41.34;
var BEAT = BAR / 4;

function rect(x, y, w, h, c) {
    return '<rect x="' + x.toFixed(2) + '" y="' + y + '" width="' + w + '" height="' + h + '" fill="' + c + '"/>';
}

// ruler
var times = ["0:00.000", "0:05.333", "0:10.666", "0:16.000", "0:21.333", "0:26.666", "0:32.000", "0:37.333", "0:42.666", "0:48.000", "0:53.333", "0:58.666", "1:04.000"];
var out = "";
for (var i = 0; i * BEAT < 1034; i++) {
    var x = Math.round(i * BEAT - 0.8);
    if (x < 0) x = 0;
    if (i % 8 == 0) {
        out += rect(x, 3, 1, 24, "#777");
        out += rect(x + 2, 12, 28, 1, "#666");
        out += '<text x="' + (x + 2) + '" y="10.7">' + (i / 4 + 1) + '.1</text>';
        out += '<text class="tm" x="' + (x + 2) + '" y="19.3">' + times[i / 8] + '</text>';
    } else {
        out += rect(x, i % 4 == 0 ? 21 : 24, 1, 6, "#757575");
    }
}
document.getElementById("ruler").innerHTML = out;

// grid, the fourth lane is the selected track
out = rect(0, 150, 1034, 49, "#4b4b4b");
for (i = 0; i * BEAT < 1034; i++) {
    out += rect(Math.round(i * BEAT), 0, 1, 260, i % 4 == 0 ? "rgba(0,0,0,.27)" : "rgba(0,0,0,.12)");
}
for (i = 1; i < 6; i++) {
    out += rect(0, i * 50 - 1, 1034, 1, "#3a3a3a");
}
document.getElementById("grid").innerHTML = out;

// midi items: length in bars, name, note pattern
var items = [
    [1, "", "intro"],
    [3, "Groove 10 - 4th China...", "g10"],
    [3, "Groove 10 - 4th China...", "g10"],
    [3, "Groove 10 - 4th China...", "g10"],
    [3, "Groove 10 - 4th China...", "g10"],
    [3, "Groove 10 - 4th China...", "g10"],
    [1, "", "fill"],
    [3, "Groove 01 - 4th Half O...", "g01"],
    [3, "Groove 01 - 4th Half O...", "g01"],
    [3, "Groove 01 - 4th Half O...", "g01"]
];
function notes(len, type) {
    var s = "", c = "#2c3434";
    function n(beat, y, w) {
        s += rect(beat * BEAT, y, w, 1, c);
    }
    if (type == "intro") {
        n(0, 17, 3); n(1, 17, 3); n(2, 17, 4); n(2.5, 21, 4); n(2.95, 19, 2); n(3.5, 21, 3);
        return s;
    }
    n(0, type == "g01" ? 12 : 7, 3);
    for (var b = 0; b < len * 4; b++) {
        var k = b % 4;
        if (type == "g01") {
            if (b > 0) n(b, 16, 2.5);
            n(b, 19, 2.5);
            if (k == 0 || k == 2) n(b, 21, 2.5);
            continue;
        }
        if (b > 0 && !(type == "fill" && b > 2)) n(b, 10, 3);
        if (k == 0) n(b, 21, 3);
        if (k == 1) { n(b, 19, 2.5); n(b, 20, 2); }
        if (k == 2) { n(b, 21, 3); n(b + 0.6, 19, 2); }
        if (k == 3) {
            n(b + 0.5, 21, 3);
            if (type == "fill") { n(b, 19, 3); n(b + 0.5, 15, 3); }
        }
    }
    return s;
}
out = "";
items.forEach(function (it) {
    var w = it[0] * BAR;
    var s = rect(0, 0, w, 38, "#808c8a");
    for (var b = 1; b < it[0] * 4; b++) {
        s += rect(b * BEAT, 0, 1, 38, b % 4 == 0 ? "#5d6967" : "#74807e");
    }
    s += notes(it[0], it[2]) + rect(0, 0, 1, 38, "#222b2b") + rect(0, 37, w, 1, "#303636");
    s += '<path d="M0 33L5 37.5H0Z" fill="#b3bab8"/>';
    out += '<div class="item" style="width:' + w + 'px"><div class="ihead"><svg><use href="#clock"/></svg><b>M</b><b>FX</b><span>' + it[1] + '</span></div>' +
        '<svg width="' + w + '" height="38">' + s + '</svg></div>';
});
document.getElementById("items").innerHTML = out;

// track panel
var names = ["", "4 - Pre Snare", "4 - Hi-Hat Special", "", "", ""];
var peaks = ["-33.4", "+0.2", "-53.8", "+0.0", "-inf", "-inf"];
out = "";
names.forEach(function (name, i) {
    var sel = i == 3;
    out += '<div class="track' + (sel ? " sel" : "") + '"><div class="no">' + (i < 5 ? i + 1 : "") + '<i></i></div><div class="rows"><div class="row">' +
        '<div class="pill"><svg><use href="#' + (sel ? "rec-on" : "rec") + '"/></svg>' +
        (sel ? '<svg class="spk"><use href="#spk"/></svg>' : '') +
        '<span>' + name + '</span><svg><use href="#vol"/></svg></div>' +
        '<div class="ms"><b>M</b><b>S</b></div><div class="fxp' + (i == 1 ? " on" : "") + '">FX<svg><use href="#power"/></svg></div></div>' +
        '<div class="row row2">' +
        (sel ? '<div class="drop in">in<b>▼</b></div><div class="drop src"><i class="infx">IN FX</i>Analog In 1/2 1<b>▼</b></div>' : '') +
        '<div class="trim"><svg><use href="#env"/></svg>TRIM</div></div></div></div>';
});
document.getElementById("tcp").innerHTML = out;

// mixer strips
out = "";
names.forEach(function (name, i) {
    var sel = i == 3, meter = "";
    if (sel) {
        meter = '<svg width="16" height="114">' + rect(0, 0, 16, 114, "#e00850") + rect(0, 0, 16, 37, "#85143c") + rect(7.5, 0, 1.5, 114, "#70082d");
        ["-6-", "-18-", "-30-", "-42-", "-54-"].forEach(function (t, k) {
            meter += '<text x="8" y="' + (12 + k * 22.2) + '" font-size="6" text-anchor="middle" fill="' + (k < 2 ? "#e0431c" : "#5c0526") + '">' + t + '</text>';
        });
        meter += '</svg>';
    }
    out += '<div class="strip' + (sel ? " sel" : "") + (i == 1 ? " on-fx" : "") + '"><div class="fxlist">' + (i == 1 ? "<span>MT-PowerDrumKit</span>" : "") + '<i></i></div>' +
        '<div class="panrow"><svg><use href="#pan"/></svg></div>' +
        '<div class="sbody"><div class="read"><span class="' + (peaks[i][0] == "+" ? "hot" : "") + '">' + peaks[i] + '</span>' + meter + '</div>' +
        '<svg width="16" height="126">' + rect(6.5, 5, 2, 115, "#080808") + '<use href="#fader" x="0.5" y="27" width="14" height="30"/></svg>' +
        '<div class="bcol"><span class="mb m">M</span><span class="mb s">S</span><svg class="rt" width="13" height="13"><use href="#route"/></svg>' +
        '<span class="mb fx">FX</span><span class="mb pw"><svg width="9" height="9"><use href="#power"/></svg></span>' +
        '<span class="mb ev"><svg width="11" height="8"><use href="#env"/></svg></span><svg class="phase" width="12" height="12"><use href="#phase"/></svg></div></div>' +
        '<div class="recrow"><svg class="spk"><use href="#spk"/></svg><svg><use href="#' + (sel ? "rec-on" : "rec") + '"/></svg></div>' +
        '<div class="name">' + name + '</div><div class="num">' + (i + 1) + '</div></div>';
});
document.getElementById("strips").innerHTML = out;

// master meter
function label(x, y, t, c, size) {
    return '<text x="' + x + '" y="' + y + '" text-anchor="middle" font-size="' + (size || 6) + '" fill="' + c + '">' + t + '</text>';
}
out = rect(0, 87, 10, 61, "#36a469") + rect(37, 87, 10, 61, "#36a469");
out += rect(11, 66, 12, 82, "#1cf58a") + rect(24, 66, 12, 82, "#1cf58a");
out += rect(11, 56, 11, 1.3, "#2f9e70") + rect(24, 56, 12, 1.3, "#2f9e70") + rect(11, 13, 12, 13, "#e00850");
out += label(31, 9, "0.00dB", "#999", 6.8) + label(11, 22, "+0.3", "#bbb") + label(35, 22, "+0.0", "#bbb");
["12", "6-", "0-", "6-", "12-", "18-", "24-", "30-", "36-", "42-"].forEach(function (t, k) {
    var y = 32 + k * 11.7, c = k > 4 ? "#175234" : "#777";
    out += label(4, y, t, c) + label(43, y, k > 1 ? "-" + t.replace("-", "") : t.replace("-", ""), c);
});
["-6-", "-12-", "-18-", "-24-", "-30-", "-36-", "-42-", "-48-", "-54-"].forEach(function (t, k) {
    out += label(23.5, 39 + k * 12, t, k > 2 ? "#0a7a44" : "#777");
});
out += label(11, 154, "RMS", "#36b374", 6.3) + label(35, 154, "+2.5", "#36b374", 6.3) + label(31, 165, "MASTER", "#ddd", 7.5);
out += rect(53.5, 20, 1.5, 130, "#080808") + '<use href="#fader" x="47" y="45" width="14" height="30"/>';
document.getElementById("mmeter").innerHTML = out;
```
